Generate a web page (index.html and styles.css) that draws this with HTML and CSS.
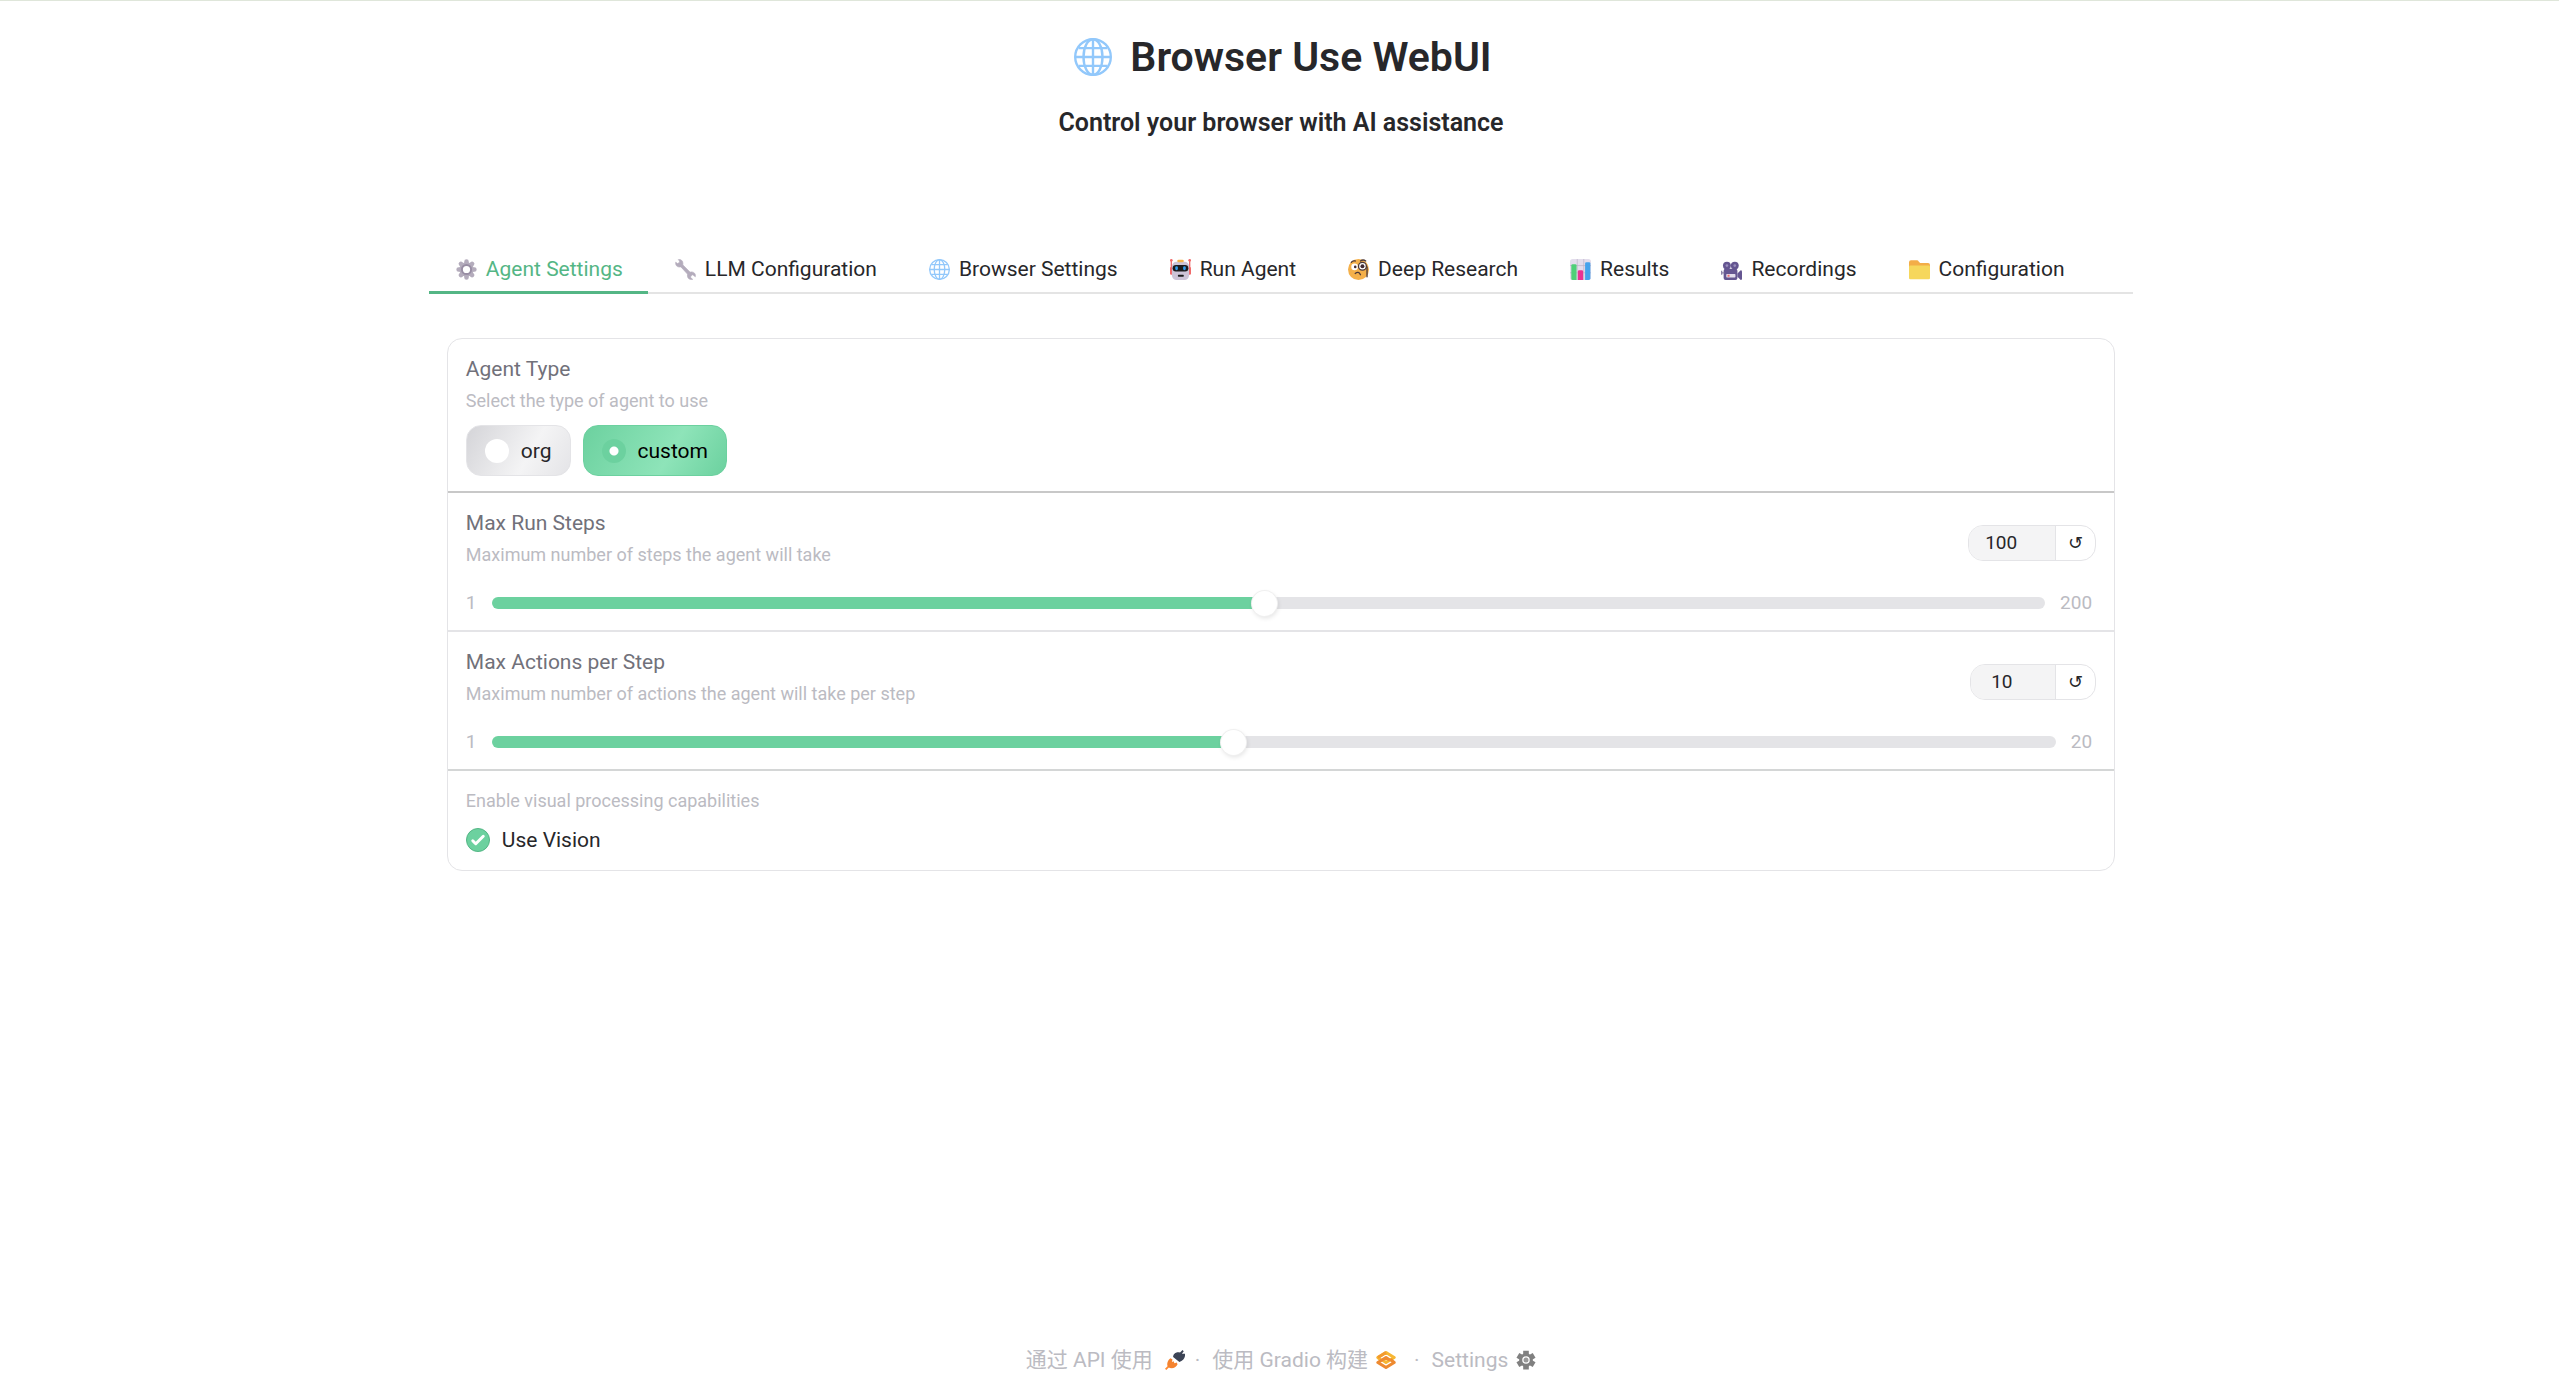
FILE: index.html
```html
<!DOCTYPE html>
<html lang="en">
<head>
<meta charset="utf-8">
<meta name="viewport" content="width=device-width, initial-scale=1">
<title>Browser Use WebUI</title>
<link rel="stylesheet" href="styles.css">
</head>
<body>
<svg class="defs" width="0" height="0" aria-hidden="true">
  <symbol id="globe" viewBox="0 0 32 32">
    <g fill="none" stroke="#92c8fb" stroke-width="2">
      <circle cx="16" cy="16" r="15"/>
      <ellipse cx="16" cy="16" rx="8" ry="15"/>
      <path d="M16 1v30M1 16h30M4 8.500h24M4 23.500h24"/>
    </g>
  </symbol>
</svg>
<div class="app">
  <header class="hero">
    <h1><svg class="hero-icon" aria-hidden="true"><use href="#globe"/></svg>Browser Use WebUI</h1>
    <h3>Control your browser with AI assistance</h3>
  </header>

  <main>
    <nav class="tabs" role="tablist">
      <button class="tab selected" role="tab" aria-selected="true">
        <svg viewBox="0 0 32 32" aria-hidden="true"><g stroke="#b4acbc" stroke-width="7" stroke-linecap="round"><path d="M16 4v24M4 16h24M7.500 7.500l17 17M24.500 7.500l-17 17"/></g><circle cx="16" cy="16" r="11" fill="#b4acbc"/><circle cx="16" cy="16" r="7" fill="#fff" stroke="#998ea4" stroke-width="3"/></svg>
        Agent Settings</button>
      <button class="tab" role="tab" aria-selected="false">
        <svg viewBox="0 0 32 32" aria-hidden="true"><path fill="#b4acbc" stroke="#b4acbc" stroke-width="1" d="M5 1c3-1 7 1 7 5l0 3 11 11c3-1 7 0 8 4l0 3-4-3-3 2 0 3 3 2c-4 1-8-1-8-5l0-3L9 12c-4 1-8-1-8-5l0-2 3 2 3-2 0-2z"/></svg>
        LLM Configuration</button>
      <button class="tab" role="tab" aria-selected="false">
        <svg viewBox="0 0 32 32" aria-hidden="true"><use href="#globe"/></svg>
        Browser Settings</button>
      <button class="tab" role="tab" aria-selected="false">
        <svg viewBox="0 0 32 32" aria-hidden="true"><g fill="#f06a6a"><rect x="1" y="2" width="2" height="12"/><rect x="29" y="2" width="2" height="12"/><circle cx="2" cy="2" r="2"/><circle cx="30" cy="2" r="2"/><rect x="0" y="12" width="6" height="12" rx="2"/><rect x="26" y="12" width="6" height="12" rx="2"/></g><rect x="3" y="4" width="26" height="28" rx="7" fill="#cdc4d6"/><rect x="11" y="1" width="10" height="4" rx="2" fill="#f4b44a"/><rect x="4" y="9" width="24" height="10" rx="5" fill="#1c1c1c"/><rect x="8" y="11" width="4" height="6" rx="2" fill="#2f9bec"/><rect x="20" y="11" width="4" height="6" rx="2" fill="#2f9bec"/><rect x="12" y="24" width="9" height="3" rx="1" fill="#1c1c1c"/></svg>
        Run Agent</button>
      <button class="tab" role="tab" aria-selected="false">
        <svg viewBox="0 0 32 32" aria-hidden="true"><circle cx="16" cy="16" r="16" fill="#f4b04a"/><circle cx="10" cy="12" r="5" fill="#fff"/><circle cx="22" cy="11" r="6" fill="#fff" stroke="#4b3838" stroke-width="2"/><circle cx="11" cy="12" r="2" fill="#402a32"/><circle cx="22" cy="11" r="3" fill="#402a32"/><path d="M29 12v15M11 22q5-4 8 2M5 5q2-3 6-2M19 3q4-3 8 0" fill="none" stroke="#4b3838" stroke-width="2" stroke-linecap="round"/></svg>
        Deep Research</button>
      <button class="tab" role="tab" aria-selected="false">
        <svg viewBox="0 0 32 32" aria-hidden="true"><rect width="32" height="32" rx="4" fill="#e3ddec"/><path d="M0 10h32M0 21h32M11 0v32M21 0v32" stroke="#b9b0c4" stroke-width="1"/><path fill="#4fcf78" d="M2 10q0-2 2-2h4q2 0 2 2v22H4q-2 0-2-2z"/><path fill="#ea3293" d="M12 19q0-2 2-2h4q2 0 2 2v13h-8z"/><path fill="#45a3ec" d="M23 7q0-2 2-2h4q2 0 2 2v23q-1 2-3 2h-5z"/></svg>
        Results</button>
      <button class="tab" role="tab" aria-selected="false">
        <svg viewBox="0 0 32 32" aria-hidden="true"><g fill="#655691"><circle cx="9" cy="10" r="6"/><circle cx="21" cy="10" r="6"/><rect x="4" y="15" width="21" height="17" rx="3"/><path d="M25 22l5-5q2 0 2 2v11q0 2-2 2l-5-5z"/></g><path d="M1 18v6M1 21h4" stroke="#8d84a8" stroke-width="2"/><circle cx="9" cy="10" r="2" fill="#9a8fbd"/><circle cx="21" cy="10" r="2" fill="#9a8fbd"/><rect x="8" y="23" width="14" height="5" rx="1" fill="#e3ddec"/><rect x="10" y="24" width="3" height="3" fill="#f06a6a"/></svg>
        Recordings</button>
      <button class="tab" role="tab" aria-selected="false">
        <svg viewBox="0 0 32 32" aria-hidden="true"><path fill="#f3ad48" d="M0 5q0-3 3-3h9q2 0 3 2l2 2h12q3 0 3 3v8H0z"/><rect y="10" width="32" height="21" rx="2" fill="#f6d75c"/></svg>
        Configuration</button>
    </nav>

    <form class="panel">
      <fieldset class="row row-dark">
        <legend class="title">Agent Type</legend>
        <p class="info">Select the type of agent to use</p>
        <div class="choices">
          <label class="choice"><input type="radio" name="agent" value="org">org</label>
          <label class="choice"><input type="radio" name="agent" value="custom" checked>custom</label>
        </div>
      </fieldset>

      <section class="row">
        <div class="head">
          <div>
            <label class="title" for="steps">Max Run Steps</label>
            <p class="info">Maximum number of steps the agent will take</p>
          </div>
          <div class="stepper">
            <input class="wide" type="number" value="100" aria-label="Max Run Steps value">
            <button type="button" aria-label="Reset max run steps">↺</button>
          </div>
        </div>
        <div class="slide"><span>1</span><input id="steps" type="range" min="1" max="200" value="100" style="--fill: 49.7%"><span>200</span></div>
      </section>

      <section class="row row-mid">
        <div class="head">
          <div>
            <label class="title" for="actions">Max Actions per Step</label>
            <p class="info">Maximum number of actions the agent will take per step</p>
          </div>
          <div class="stepper">
            <input type="number" value="10" aria-label="Max Actions per Step value">
            <button type="button" aria-label="Reset max actions per step">↺</button>
          </div>
        </div>
        <div class="slide"><span>1</span><input id="actions" type="range" min="1" max="20" value="10" style="--fill: 47.4%"><span>20</span></div>
      </section>

      <section class="row row-last">
        <p class="info" id="vision-info">Enable visual processing capabilities</p>
        <label class="check"><span class="tick"><input type="checkbox" checked aria-describedby="vision-info"><svg viewBox="0 0 16 16" aria-hidden="true"><path fill="#fff" d="M12.207 4.793a1 1 0 0 1 0 1.414l-5 5a1 1 0 0 1-1.414 0l-2-2a1 1 0 0 1 1.414-1.414L6.500 9.086l4.293-4.293a1 1 0 0 1 1.414 0z"/></svg></span>Use Vision</label>
      </section>
    </form>
  </main>

  <footer>
    <a href="#api">通过 API 使用
      <svg class="rocket" viewBox="0 0 32 32" aria-hidden="true"><g stroke="#ff8a33" stroke-width="3"><path d="M1 31l6-6"/></g><path fill="#f5832f" d="M5 27c-3-4-1-11 4-14l3 2-1 4 3-1 1 3 4-1 1 3c-3 6-10 8-15 4z"/><path fill="#3c4456" d="M13 11c0-5 5-9 11-7l4-4 2 2-3 4 5 0c1 6-3 12-9 13z"/></svg></a>
    <span class="dot">·</span>
    <a href="#gradio">使用 Gradio 构建
      <svg viewBox="0 0 32 32" aria-hidden="true"><g fill="none" stroke-width="5" stroke-linejoin="round"><path stroke="#f7b733" d="M9 17l-6-5L16 4l13 8-13 8-6-4"/><path stroke="#ee8a30" d="M23 15l6 5-13 8L3 20l13-8 6 4"/><path stroke="#f39a2e" d="M3 12L16 4"/></g></svg></a>
    <span class="dot dot-wide">·</span>
    <button type="button">Settings
      <svg viewBox="0 0 32 32" aria-hidden="true"><g stroke="#808080" stroke-width="9" stroke-linejoin="round"><path d="M16 1v30M3 8.500l26 15M29 8.500l-26 15"/></g><circle cx="16" cy="16" r="11" fill="#808080"/><circle cx="16" cy="16" r="5" fill="#999" stroke="#fff" stroke-width="2"/></svg></button>
  </footer>
</div>
</body>
</html>
```
FILE: styles.css
```css
* { box-sizing: border-box; }

body {
  display: flex;
  justify-content: center;
  min-height: 100vh;
  margin: 0;
  border-top: 1px solid #dfe6da;
  background: #fff;
  color: #27272a;
  font-family: Roboto, "Noto Sans CJK SC", sans-serif;
  font-size: 21px;
  line-height: 26px;
}

button, input { font: inherit; color: inherit; }
button { background: none; border: 0; cursor: pointer; }
p, h1, h3, fieldset, legend { margin: 0; padding: 0; }
svg { display: block; flex: none; }
.defs { position: absolute; }

.app {
  display: flex;
  flex-direction: column;
  width: 70%;
  padding: 0 42px 0 45px;
}

/* Heading */
.hero { padding-top: 30px; text-align: center; }
.hero h1 {
  display: flex;
  justify-content: center;
  align-items: center;
  gap: 18px;
  padding-left: 4px;
  font-size: 41px;
  line-height: 52px;
  font-weight: 600;
}
.hero-icon { width: 38px; height: 38px; }
.hero h3 { margin-top: 24px; font-size: 25px; line-height: 32px; font-weight: 600; }

/* Tabs */
.tabs {
  display: flex;
  margin-top: 108px;
  box-shadow: inset 0 -2px #e4e4e4;
}
.tab {
  display: flex;
  align-items: center;
  gap: 9px;
  height: 47px;
  padding: 0 25px 3px 27px;
  white-space: nowrap;
}
.tab svg { width: 21px; height: 21px; }
.tab.selected { color: #54b685; box-shadow: inset 0 -3px #54b685; }

/* Settings panel */
.panel {
  margin: 44px 18px 0;
  border: 1px solid #e4e4e7;
  border-radius: 15px;
}
.row {
  min-width: 0;
  padding: 17px 18px 15px;
  border: 0;
  border-bottom: 2px solid #e4e4e7;
}
.row-dark { border-bottom-color: #c8c8c8; }
.row-mid { border-bottom-color: #d4d6d6; }
.row-last { padding: 18px 18px 16px; border-bottom: 0; }
.row legend { float: left; width: 100%; }
.title { display: block; color: #71717a; }
.info { clear: both; padding-top: 7px; font-size: 18px; line-height: 24px; color: #bbbbc2; }
.row-last .info { padding-top: 0; }

.choices { display: flex; gap: 12px; margin-top: 12px; }
.choice {
  display: flex;
  align-items: center;
  gap: 12px;
  height: 51px;
  padding: 0 18px;
  border: 1px solid #e4e4e7;
  border-radius: 15px;
  background: linear-gradient(120deg, #d4d4d8, #f4f4f5 60%, #e4e4e7);
}
.choice:has(:checked) {
  border-color: #6cd19f;
  background: linear-gradient(120deg, #6cd19f, #8ee4b9 60%, #6cd19f);
  color: #000;
}
.choice input {
  appearance: none;
  width: 24px;
  height: 24px;
  margin: 0;
  border-radius: 50%;
  background: #fff;
}
.choice input:checked { background: radial-gradient(circle, #fff 4px, #6cd19f 5px); }

.head { display: flex; justify-content: space-between; align-items: flex-start; }
.stepper {
  display: flex;
  height: 36px;
  margin-top: 15px;
  border: 1px solid #e4e4e7;
  border-radius: 15px;
  overflow: hidden;
}
.stepper input {
  appearance: textfield;
  width: 84px;
  padding: 0 0 0 20px;
  border: 0;
  background: #f4f4f5;
  font-size: 19px;
}
.stepper input.wide { width: 86px; padding-left: 16px; }
.stepper input::-webkit-inner-spin-button { display: none; }
.stepper button {
  width: 40px;
  padding: 0;
  border-left: 1px solid #e4e4e7;
  font-family: "DejaVu Sans", sans-serif;
  font-size: 18px;
}

.slide {
  display: flex;
  align-items: center;
  gap: 15px;
  margin-top: 24px;
  padding-right: 4px;
  font-size: 19px;
  line-height: 24px;
  color: #bbbbc2;
}
.slide input {
  appearance: none;
  flex: 1;
  min-width: 0;
  height: 12px;
  margin: 0;
  border-radius: 6px;
  background: linear-gradient(to right, #6cd19f var(--fill), #e4e4e7 var(--fill));
}
.slide input::-webkit-slider-thumb {
  appearance: none;
  width: 25px;
  height: 25px;
  border-radius: 50%;
  background: #fff;
  box-shadow: 0 0 0 1px #f0f0f0, 1px 2px 5px rgba(0, 0, 0, 0.12);
}

.check {
  display: flex;
  align-items: center;
  gap: 12px;
  width: max-content;
  margin-top: 13px;
  line-height: 28px;
}
.tick { display: grid; }
.tick > * { grid-area: 1 / 1; width: 24px; height: 24px; }
.tick svg { pointer-events: none; }
.tick input {
  appearance: none;
  margin: 0;
  border: 1px solid #54b685;
  border-radius: 50%;
  background: #6cd19f;
}

/* Footer */
footer {
  display: flex;
  justify-content: center;
  align-items: center;
  margin-top: auto;
  padding: 24px 0 26px;
  color: #bbbbc2;
}
footer a, footer button {
  display: flex;
  align-items: center;
  gap: 8px;
  padding: 0;
  color: inherit;
  text-decoration: none;
}
footer svg { width: 20px; height: 20px; }
footer .rocket { margin-left: 4px; }
.dot { margin: 0 12px 0 10px; }
.dot-wide { margin-left: 18px; }
```
